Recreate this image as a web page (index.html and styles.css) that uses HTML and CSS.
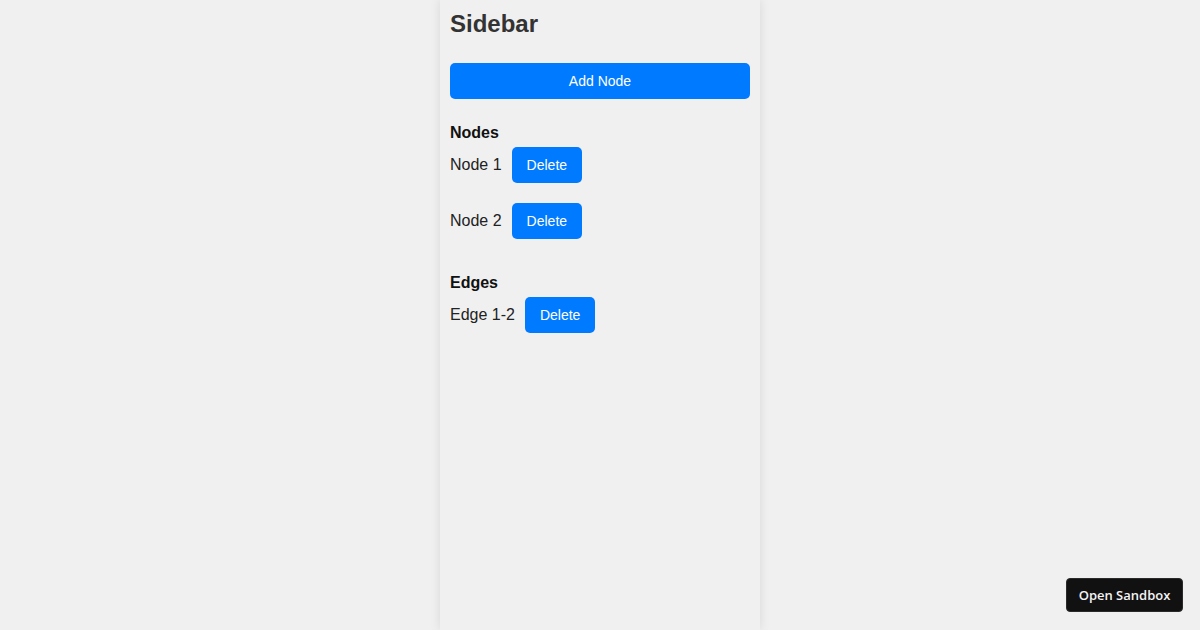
FILE: index.html
```html
<!DOCTYPE html>
<html>
<head>
<meta charset="utf-8">
<link rel="stylesheet" href="styles.css">
</head>
<body>
<div class="page">
  <aside class="sidebar">
    <h2 class="title">Sidebar</h2>
    <button class="btn btn-wide">Add Node</button>
    <h3 class="section-title">Nodes</h3>
    <div class="list">
      <div class="row"><span class="label">Node 1</span><button class="btn">Delete</button></div>
      <div class="row"><span class="label">Node 2</span><button class="btn">Delete</button></div>
    </div>
    <h3 class="section-title section-gap">Edges</h3>
    <div class="list">
      <div class="row"><span class="label">Edge 1-2</span><button class="btn">Delete</button></div>
    </div>
  </aside>
</div>
<button class="sandbox">Open Sandbox</button>
</body>
</html>
```

FILE: styles.css
```css
html, body {
  margin: 0;
  padding: 0;
  height: 100%;
  background: #f0f0f0;
  font-family: "Liberation Sans", Arial, sans-serif;
  overflow: hidden;
}
.page {
  display: flex;
  justify-content: center;
  height: 100%;
}
.sidebar {
  width: 300px;
  padding: 10px;
  background: #f0f0f0;
  box-shadow: 0 0 10px rgba(0, 0, 0, 0.1);
  display: flex;
  flex-direction: column;
  align-items: stretch;
}
.title {
  margin: 0 0 25px;
  font-size: 24px;
  line-height: 28px;
  font-weight: bold;
  color: #333;
}
.btn {
  background: #007bff;
  color: #fff;
  border: none;
  border-radius: 5px;
  font-family: "Liberation Sans", Arial, sans-serif;
  font-size: 14px;
  line-height: 16px;
  padding: 10px 15px;
  cursor: pointer;
}
.btn-wide {
  width: 100%;
}
.section-title {
  margin: 25px 0 5px;
  font-size: 16px;
  line-height: 18px;
  font-weight: bold;
  color: #111;
}
.section-gap {
  margin-top: 35px;
}
.list {
  display: flex;
  flex-direction: column;
  gap: 20px;
}
.row {
  display: flex;
  align-items: center;
  gap: 10px;
}
.label {
  font-size: 16px;
  color: #222;
}
.sandbox {
  position: fixed;
  right: 17px;
  bottom: 18px;
  width: 117px;
  height: 34px;
  background: #111;
  color: #f4f4f4;
  border: 1px solid #2a2a2a;
  border-radius: 4px;
  font-family: "Open Sans", sans-serif;
  font-weight: 600;
  font-size: 13px;
  padding: 0;
}
```
